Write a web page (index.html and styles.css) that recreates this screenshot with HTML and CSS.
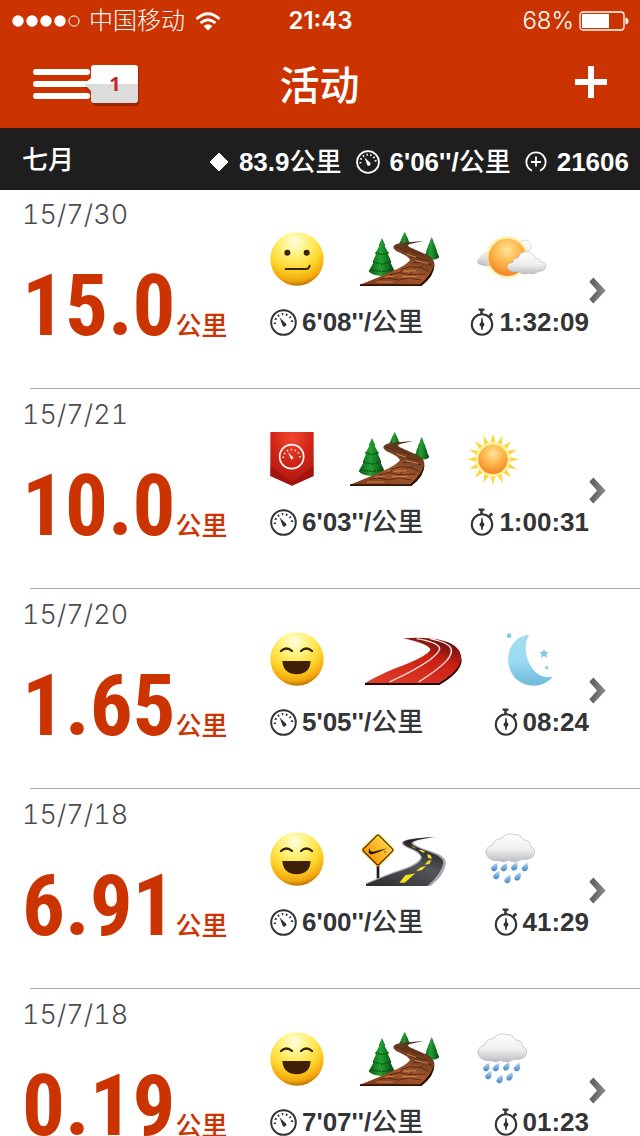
FILE: index.html
```html
<!DOCTYPE html>
<html lang="zh-CN">
<head>
    <meta charset="UTF-8">
    <meta name="viewport" content="width=device-width, initial-scale=1">
    <title>活动</title>
    <link rel="stylesheet" href="styles.css">
</head>
<body>
<!-- 图标 -->
<svg class="sprite" aria-hidden="true">
    <defs>
        <radialGradient id="face-fill" cx="45%" cy="18%" r="85%">
            <stop offset="0" stop-color="#fffde0"/>
            <stop offset="0.3" stop-color="#fff27c"/>
            <stop offset="0.62" stop-color="#fcd62a"/>
            <stop offset="0.86" stop-color="#f2a50c"/>
            <stop offset="1" stop-color="#a86400"/>
        </radialGradient>
        <linearGradient id="tree-fill">
            <stop offset="0" stop-color="#0a5a14"/>
            <stop offset="0.45" stop-color="#22a035"/>
            <stop offset="1" stop-color="#06460f"/>
        </linearGradient>
        <linearGradient id="trail-fill" x1="0" y1="1" x2="0.6" y2="0">
            <stop offset="0" stop-color="#7a3717"/>
            <stop offset="0.5" stop-color="#a4592d"/>
            <stop offset="1" stop-color="#54301c"/>
        </linearGradient>
        <linearGradient id="track-fill" x1="0" y1="1" x2="0.7" y2="0">
            <stop offset="0" stop-color="#e0402c"/>
            <stop offset="0.7" stop-color="#cc1f14"/>
            <stop offset="1" stop-color="#6d130d"/>
        </linearGradient>
        <linearGradient id="road-fill" x1="0" y1="1" x2="0.5" y2="0">
            <stop offset="0" stop-color="#2c2c2e"/>
            <stop offset="0.6" stop-color="#55565a"/>
            <stop offset="1" stop-color="#222"/>
        </linearGradient>
        <linearGradient id="sign-fill" x2="0" y2="1">
            <stop offset="0" stop-color="#ffd24a"/>
            <stop offset="1" stop-color="#f79a00"/>
        </linearGradient>
        <radialGradient id="sun-fill" cx="50%" cy="30%" r="75%">
            <stop offset="0" stop-color="#ffe39a"/>
            <stop offset="0.45" stop-color="#ffb94e"/>
            <stop offset="1" stop-color="#f07c1c"/>
        </radialGradient>
        <radialGradient id="glow-fill">
            <stop offset="0.7" stop-color="#ffd34a"/>
            <stop offset="1" stop-color="#fff3a0" stop-opacity="0"/>
        </radialGradient>
        <linearGradient id="cloud-fill" x2="0" y2="1">
            <stop offset="0" stop-color="#fff"/>
            <stop offset="0.55" stop-color="#efefef"/>
            <stop offset="1" stop-color="#bdbdc0"/>
        </linearGradient>
        <linearGradient id="moon-fill" x2="0" y2="1">
            <stop offset="0" stop-color="#a5dcee"/>
            <stop offset="0.5" stop-color="#9bdcf3"/>
            <stop offset="1" stop-color="#6fb9d8"/>
        </linearGradient>
        <linearGradient id="drop-fill" x2="0" y2="1">
            <stop offset="0" stop-color="#c6dcf0"/>
            <stop offset="1" stop-color="#3b86c8"/>
        </linearGradient>
        <radialGradient id="medal-fill" cx="50%" cy="10%" r="95%">
            <stop offset="0" stop-color="#f0472f"/>
            <stop offset="0.5" stop-color="#cf2416"/>
            <stop offset="1" stop-color="#a81410"/>
        </radialGradient>
        <linearGradient id="arrow-fill">
            <stop offset="0" stop-color="#5a5a5a"/>
            <stop offset="1" stop-color="#8c8c8c"/>
        </linearGradient>
        <path id="tree" d="M40 0 L50 22 L48 24 L60 46 L58 48 L68 72 L66 74 L78 100 Q72 112 40 114 Q8 112 0 100 L14 74 L12 72 L22 48 L20 46 L32 24 L30 22 Z"/>
        <path id="drop" d="M15 0 Q20 18 10 25 Q-1 28 -3 17 Q0 8 15 0 Z"/>
        <path id="rays" d="M-9 -44 L0 -77 L9 -44 Z M-9 44 L0 77 L9 44 Z M-44 -9 L-77 0 L-44 9 Z M44 -9 L77 0 L44 9 Z"/>
    </defs>

    <symbol id="gauge" viewBox="0 0 27 27">
        <circle cx="13.5" cy="13.5" r="12.3" fill="none" stroke="currentColor" stroke-width="2"/>
        <path d="M5 15 A8.6 8.6 0 1 1 22 15" fill="none" stroke="currentColor" stroke-width="2.2" stroke-dasharray="1.6 2.7"/>
        <path d="M9.6 8.4 L16 14.4 A2 2 0 0 1 12.6 16.8 Z" fill="currentColor"/>
    </symbol>
    <symbol id="watch" viewBox="0 0 24 28">
        <circle cx="12" cy="16.5" r="10.2" fill="none" stroke="currentColor" stroke-width="2.1"/>
        <path d="M8.5 0.5 h6 v2.2 h-1.7 v4 h-2.6 v-4 h-1.7 Z M18.5 7.2 L21 4.6 L23.2 6.6 L20.4 9.2 Z M11.4 10 h1.2 l0.5 4.6 a2 2 0 0 1 0 3.8 l-0.5 3.6 h-1.2 l-0.5 -3.6 a2 2 0 0 1 0 -3.8 Z" fill="currentColor"/>
    </symbol>
    <symbol id="fuel" viewBox="0 0 22 22">
        <path d="M7 19.8 A9.6 9.6 0 1 1 15 19.8 M11 5.5 v10 M6 11 h10" fill="none" stroke="currentColor" stroke-width="1.8"/>
    </symbol>
    <symbol id="arrow" viewBox="0 0 51 80">
        <path d="M13 1 L50 40 L13 79 L1 66 L24 40 L1 14 Z" fill="url(#arrow-fill)"/>
    </symbol>

    <symbol id="face-ok" viewBox="0 0 162 162">
        <circle cx="81" cy="81" r="80" fill="url(#face-fill)"/>
        <circle cx="52" cy="62" r="9" fill="#3a2206"/>
        <circle cx="110" cy="62" r="9" fill="#3a2206"/>
        <path d="M47 111 H108 Q117 111 119 101" fill="none" stroke="#3a2206" stroke-width="6" stroke-linecap="round"/>
    </symbol>
    <symbol id="face-happy" viewBox="0 0 162 162">
        <circle cx="81" cy="81" r="80" fill="url(#face-fill)"/>
        <path d="M33 57 Q49 42 66 57 M93 57 Q109 42 126 57" fill="none" stroke="#3a2206" stroke-width="7" stroke-linecap="round"/>
        <path d="M37 87 H122 Q120 126 80 127 Q40 126 37 87 Z" fill="#3f2009"/>
    </symbol>
    <symbol id="medal" viewBox="0 0 132 162">
        <path d="M1 3 Q1 0 4 0 H128 Q131 0 131 3 V132 L66 161 L1 132 Z" fill="url(#medal-fill)"/>
        <path d="M1 100 L66 150 L131 100 V132 L66 161 L1 132 Z" fill="#8e0f0c" opacity="0.45"/>
        <circle cx="65" cy="74" r="36" fill="none" stroke="#fff" stroke-width="5"/>
        <path d="M40 78 A25 25 0 1 1 90 78" fill="none" stroke="#fff" stroke-width="5" stroke-dasharray="4 8"/>
        <path d="M54 61 L71 77 L64 83 Z" fill="#fff"/>
    </symbol>

    <symbol id="trail" viewBox="0 0 240 162">
        <use href="#tree" transform="translate(118 0) scale(0.4 0.32)" fill="url(#tree-fill)"/>
        <use href="#tree" transform="translate(191 15) scale(0.6)" fill="url(#tree-fill)"/>
        <use href="#tree" transform="translate(26 18)" fill="url(#tree-fill)"/>
        <path d="M46 62 L66 68 L86 62 M40 90 L66 96 L94 90 M34 114 L66 119 L98 114" fill="none" stroke="#064a10" stroke-width="4" stroke-dasharray="5 3"/>
        <path d="M0 158 Q60 134 100 116 Q142 98 150 84 Q146 74 120 62 Q100 54 100 44 Q102 36 124 33 L192 26 L150 36 Q138 40 150 46 L208 72 Q226 84 223 104 Q218 130 184 162 H0 Z" fill="url(#trail-fill)"/>
        <path d="M108 45 L126 50 L142 60 M128 42 L156 58 L182 68 M150 72 L178 80 L204 84 M160 92 L190 90 L214 100 M122 112 L152 104 L186 108 L206 118 M88 128 L118 122 L150 128 L196 126 M58 142 L86 138 L116 144 L148 138 L184 144 M118 122 L128 114 M150 128 L160 114 M180 108 L190 98 M86 138 L98 130" fill="none" stroke="#5c2810" stroke-width="3"/>
        <path d="M140 66 L168 76 M166 86 L204 94 M132 118 L168 116 M74 136 L104 132 M126 134 L170 134 M50 150 L100 150" fill="none" stroke="#cf8452" stroke-width="3"/>
        <path d="M0 157 H180 Q212 130 223 98 Q224 132 184 162 H0 Z" fill="#301407"/>
    </symbol>
    <symbol id="track" viewBox="0 0 306 162">
        <path d="M15 153 H235 Q292 120 304 78 L305 88 Q300 124 238 159 H15 Z" fill="#240504"/>
        <path d="M15 153 Q72 120 134 98 Q200 72 211 54 Q212 38 130 19 Q200 14 250 26 Q302 40 304 78 Q300 118 235 153 Z" fill="url(#track-fill)"/>
        <path d="M88 150 Q170 112 210 83 Q244 56 238 46 Q228 30 170 20 M176 150 Q236 112 260 86 Q284 58 268 42 Q250 28 210 20" fill="none" stroke="#fbe9e4" stroke-width="4"/>
    </symbol>
    <symbol id="road" viewBox="0 0 264 162">
        <path d="M50 96 h8 v44 h-8 Z" fill="#1b1b1b"/>
        <path d="M18 154 Q80 126 130 110 Q180 92 182 74 Q176 60 148 50 Q122 40 126 30 Q134 18 226 15 Q166 24 160 32 Q160 40 214 58 Q258 72 258 92 Q254 128 212 162 H18 Z" fill="#aaa6b0"/>
        <path d="M18 157 Q80 130 130 114 Q184 96 186 76 Q180 58 150 48 Q126 38 130 31 Q138 20 220 16 Q158 24 154 33 Q156 42 208 60 Q252 76 250 92 Q244 126 202 162 H18 Z" fill="url(#road-fill)"/>
        <path d="M118 152 L136 130 L166 124 L146 142 L134 152 Z M168 118 L182 106 L198 102 L186 114 Z M194 98 L204 86 L214 84 L208 96 Z M204 78 L202 66 L212 70 L216 80 Z M176 54 L186 54 L196 60 L190 62 Z M152 42 L162 44 L168 50 Z" fill="#f6e11e"/>
        <rect x="17" y="17" width="74" height="74" rx="7" transform="rotate(45 54 54)" fill="url(#sign-fill)"/>
        <rect x="21" y="21" width="66" height="66" rx="5" transform="rotate(45 54 54)" fill="none" stroke="#3a2a06" stroke-width="3"/>
        <path d="M30 48 Q20 64 33 67 Q42 67 82 49 L40 59 Q28 61 30 48 Z" fill="#1b1404"/>
        <circle cx="75" cy="60" r="2.5" fill="#6b4705"/>
    </symbol>

    <symbol id="cloudy" viewBox="0 0 216 162">
        <path d="M6 94 Q0 82 14 78 Q18 62 36 62 L60 60 L70 100 Q20 106 6 94 Z M130 34 Q140 20 154 26 Q170 34 164 52 L140 66 Z" fill="url(#cloud-fill)" stroke="#bbb" stroke-width="1.5"/>
        <circle cx="94" cy="76" r="69" fill="url(#glow-fill)"/>
        <circle cx="94" cy="76" r="56" fill="url(#sun-fill)"/>
        <path d="M94 106 Q92 92 110 92 Q112 76 126 78 Q134 56 156 60 Q174 62 178 80 Q190 76 194 90 Q212 90 210 104 Q206 118 188 118 Q174 130 158 124 Q140 130 130 120 Q98 122 94 106 Z" fill="url(#cloud-fill)" stroke="#aaa" stroke-width="1.5"/>
    </symbol>
    <symbol id="sunny" viewBox="0 0 162 162">
        <g transform="translate(81 82)" fill="#fbd63c">
            <use href="#rays"/>
            <use href="#rays" transform="rotate(22.5)"/>
            <use href="#rays" transform="rotate(45)"/>
            <use href="#rays" transform="rotate(67.5)"/>
            <circle r="52" fill="#fff09a"/>
            <circle r="44" fill="url(#sun-fill)"/>
        </g>
    </symbol>
    <symbol id="moon" viewBox="0 0 162 162">
        <path d="M94 8 C40 12 22 70 34 106 C50 168 130 178 164 134 C130 142 104 118 92 90 C80 60 80 30 94 8 Z" fill="url(#moon-fill)"/>
        <path d="M138 50 l4 9 l10 1 l-7 7 l2 10 l-9 -5 l-9 5 l2 -10 l-7 -7 l10 -1 Z" fill="#85c9df"/>
        <circle cx="33" cy="11" r="7" fill="#85cbe0"/>
        <circle cx="146" cy="107" r="5" fill="#85cbe0"/>
    </symbol>
    <symbol id="rain" viewBox="0 0 162 162">
        <path d="M10 72 Q-4 48 26 39 Q30 20 52 20 Q64 2 90 7 Q110 8 120 24 Q140 26 138 42 Q158 50 150 68 Q144 84 112 82 Q92 96 74 84 Q60 94 46 86 Q18 88 10 72 Z" fill="url(#cloud-fill)" stroke="#b4b4b8" stroke-width="2"/>
        <g fill="url(#drop-fill)">
            <use href="#drop" x="24" y="92"/>
            <use href="#drop" x="53" y="92"/>
            <use href="#drop" x="84" y="90"/>
            <use href="#drop" x="116" y="92"/>
            <use href="#drop" x="30" y="116"/>
            <use href="#drop" x="64" y="128"/>
            <use href="#drop" x="94" y="120"/>
        </g>
    </symbol>
</svg>

<header class="header">
    <div class="status">
        <div class="status-left">
            <svg class="signal" viewBox="0 0 68 12">
                <g fill="#fff">
                    <circle cx="6" cy="6" r="5.7"/>
                    <circle cx="20" cy="6" r="5.7"/>
                    <circle cx="34" cy="6" r="5.7"/>
                    <circle cx="48" cy="6" r="5.7"/>
                </g>
                <circle cx="62" cy="6" r="5.1" fill="none" stroke="#fff"/>
            </svg>
            <span class="carrier">中国移动</span>
            <svg class="wifi" viewBox="0 0 26 19">
                <path d="M1.5 7 Q13 -3.5 24.5 7 M5.5 11 Q13 4.5 20.5 11" fill="none" stroke="#fff" stroke-width="2.8"/>
                <path d="M8.5 14 Q13 10.4 17.5 14 L13 18.5 Z" fill="#fff"/>
            </svg>
        </div>
        <span class="clock">21:43</span>
        <div class="status-right">
            <span>68%</span>
            <svg class="battery" viewBox="0 0 50 20">
                <rect x="1" y="1" width="44" height="18" rx="3" fill="none" stroke="#fff" stroke-width="1.3"/>
                <rect x="3" y="3" width="27" height="14" fill="#fff"/>
                <path d="M46.5 6.5 Q49.5 7 49.5 10 Q49.5 13 46.5 13.5 Z" fill="#fff"/>
            </svg>
        </div>
    </div>
    <div class="nav">
        <button type="button" class="menu-btn" aria-label="菜单">
            <svg viewBox="0 0 108 44">
                <path d="M61 5 Q61 2 64 2 H104 Q107 2 107 5 V39 Q107 42 104 42 H64 Q61 42 61 39 V29 L52 23 L61 16 Z" fill="#7c2000" opacity="0.6"/>
                <g fill="#fff">
                    <rect x="1" y="5" width="57" height="6" rx="3"/>
                    <rect x="1" y="17" width="56" height="6" rx="3"/>
                    <rect x="1" y="29" width="57" height="6" rx="3"/>
                    <path d="M59 4 Q59 1 62 1 H103 Q106 1 106 4 V20 H52 L59 14 Z"/>
                </g>
                <path d="M52 20 H106 V36 Q106 39 103 39 H62 Q59 39 59 36 V27 Z" fill="#dcdcdc"/>
            </svg>
            <span class="menu-badge">1</span>
        </button>
        <h1 class="nav-title">活动</h1>
        <button type="button" class="add-btn" aria-label="添加">
            <svg viewBox="0 0 32 32"><path d="M13 0 h6 v13 h13 v6 h-13 v13 h-6 v-13 h-13 v-6 h13 Z" fill="#fff"/></svg>
        </button>
    </div>
</header>

<div class="summary">
    <h2 class="summary-month">七月</h2>
    <div class="summary-item">
        <svg class="icon-diamond" viewBox="0 0 20 20"><path d="M10 1 L19 10 L10 19 L1 10 Z" fill="#fff" stroke="#fff" stroke-linejoin="round"/></svg>
        <span>83.9<span class="cn">公里</span></span>
    </div>
    <div class="summary-item">
        <svg class="icon-pace"><use href="#gauge"/></svg>
        <span>6'06''/<span class="cn">公里</span></span>
    </div>
    <div class="summary-item">
        <svg class="icon-fuel"><use href="#fuel"/></svg>
        <span>21606</span>
    </div>
</div>

<ul class="list">
    <li class="run">
        <a href="#" class="run-link">
            <div class="run-main">
                <div class="run-date">15/7/30</div>
                <div class="run-distance"><span class="num">15.0</span><span class="unit">公里</span></div>
            </div>
            <div class="run-info">
                <div class="run-icons">
                    <svg class="face"><use href="#face-ok"/></svg>
                    <svg class="trail"><use href="#trail"/></svg>
                    <svg class="cloudy"><use href="#cloudy"/></svg>
                </div>
                <div class="run-stats">
                    <span class="stat"><svg class="icon-gauge"><use href="#gauge"/></svg><span>6'08''/<span class="cn">公里</span></span></span>
                    <span class="stat"><svg class="icon-watch"><use href="#watch"/></svg>1:32:09</span>
                </div>
            </div>
            <svg class="arrow"><use href="#arrow"/></svg>
        </a>
    </li>
    <li class="run">
        <a href="#" class="run-link">
            <div class="run-main">
                <div class="run-date">15/7/21</div>
                <div class="run-distance"><span class="num">10.0</span><span class="unit">公里</span></div>
            </div>
            <div class="run-info">
                <div class="run-icons">
                    <svg class="medal"><use href="#medal"/></svg>
                    <svg class="trail"><use href="#trail"/></svg>
                    <svg class="weather"><use href="#sunny"/></svg>
                </div>
                <div class="run-stats">
                    <span class="stat"><svg class="icon-gauge"><use href="#gauge"/></svg><span>6'03''/<span class="cn">公里</span></span></span>
                    <span class="stat"><svg class="icon-watch"><use href="#watch"/></svg>1:00:31</span>
                </div>
            </div>
            <svg class="arrow"><use href="#arrow"/></svg>
        </a>
    </li>
    <li class="run">
        <a href="#" class="run-link">
            <div class="run-main">
                <div class="run-date">15/7/20</div>
                <div class="run-distance"><span class="num">1.65</span><span class="unit">公里</span></div>
            </div>
            <div class="run-info">
                <div class="run-icons">
                    <svg class="face"><use href="#face-happy"/></svg>
                    <svg class="track"><use href="#track"/></svg>
                    <svg class="weather"><use href="#moon"/></svg>
                </div>
                <div class="run-stats">
                    <span class="stat"><svg class="icon-gauge"><use href="#gauge"/></svg><span>5'05''/<span class="cn">公里</span></span></span>
                    <span class="stat"><svg class="icon-watch"><use href="#watch"/></svg>08:24</span>
                </div>
            </div>
            <svg class="arrow"><use href="#arrow"/></svg>
        </a>
    </li>
    <li class="run">
        <a href="#" class="run-link">
            <div class="run-main">
                <div class="run-date">15/7/18</div>
                <div class="run-distance"><span class="num">6.91</span><span class="unit">公里</span></div>
            </div>
            <div class="run-info">
                <div class="run-icons">
                    <svg class="face"><use href="#face-happy"/></svg>
                    <svg class="road"><use href="#road"/></svg>
                    <svg class="weather"><use href="#rain"/></svg>
                </div>
                <div class="run-stats">
                    <span class="stat"><svg class="icon-gauge"><use href="#gauge"/></svg><span>6'00''/<span class="cn">公里</span></span></span>
                    <span class="stat"><svg class="icon-watch"><use href="#watch"/></svg>41:29</span>
                </div>
            </div>
            <svg class="arrow"><use href="#arrow"/></svg>
        </a>
    </li>
    <li class="run">
        <a href="#" class="run-link">
            <div class="run-main">
                <div class="run-date">15/7/18</div>
                <div class="run-distance"><span class="num">0.19</span><span class="unit">公里</span></div>
            </div>
            <div class="run-info">
                <div class="run-icons">
                    <svg class="face"><use href="#face-happy"/></svg>
                    <svg class="trail"><use href="#trail"/></svg>
                    <svg class="weather"><use href="#rain"/></svg>
                </div>
                <div class="run-stats">
                    <span class="stat"><svg class="icon-gauge"><use href="#gauge"/></svg><span>7'07''/<span class="cn">公里</span></span></span>
                    <span class="stat"><svg class="icon-watch"><use href="#watch"/></svg>01:23</span>
                </div>
            </div>
            <svg class="arrow"><use href="#arrow"/></svg>
        </a>
    </li>
</ul>
</body>
</html>
```
FILE: styles.css
```css
* {
    box-sizing: border-box;
}
body, h1, h2, ul, li {
    margin: 0;
    padding: 0;
}
body {
    background: #ffffff;
    color: #333436;
    font-family: "Liberation Sans", "Noto Sans CJK SC", sans-serif;
}
svg {
    display: block;
    flex: none;
}
button {
    padding: 0;
    border: 0;
    background: none;
    cursor: pointer;
}
.sprite {
    position: absolute;
    width: 0;
    height: 0;
}
/* 顶部 */
.header {
    background: #cb3301;
    color: #ffffff;
}
.status {
    display: grid;
    grid-template-columns: 1fr auto 1fr;
    align-items: center;
    height: 40px;
    padding: 2px 11px 0 12px;
    font-family: Inter, "Noto Sans CJK SC", sans-serif;
    font-size: 24px;
    line-height: 38px;
}
.status-left, .status-right {
    display: flex;
    align-items: center;
}
.status-right {
    justify-content: flex-end;
    gap: 5px;
    font-weight: 300;
}
.signal {
    width: 68px;
    height: 12px;
    margin-right: 9px;
}
.carrier {
    margin-right: 10px;
    font-weight: 300;
}
.wifi {
    width: 26px;
    height: 19px;
}
.clock {
    font-weight: 600;
}
.battery {
    width: 50px;
    height: 20px;
}
.nav {
    display: grid;
    grid-template-columns: 1fr auto 1fr;
    align-items: center;
    height: 88px;
    padding: 4px 33px 0 32px;
}
.menu-btn {
    position: relative;
    width: 108px;
    height: 44px;
}
.menu-badge {
    position: absolute;
    top: 0;
    right: 2px;
    width: 46px;
    color: #c1272d;
    font: bold 20px/40px "Noto Sans", sans-serif;
    text-align: center;
}
.nav-title {
    font-size: 40px;
    font-weight: 500;
    line-height: 48px;
}
.add-btn {
    justify-self: end;
    width: 32px;
    height: 32px;
    margin-bottom: 8px;
}
/* 月份汇总 */
.summary {
    display: flex;
    align-items: center;
    height: 62px;
    padding: 4px 11px 0 22px;
    border-top: 1px solid #33150f;
    background: #1e1e1e;
    color: #ffffff;
    font-size: 26px;
    font-weight: bold;
    line-height: 32px;
}
.summary-month {
    flex: 1;
    padding-bottom: 4px;
    font-size: 26px;
    font-weight: 500;
}
.summary-item {
    display: flex;
    align-items: center;
    gap: 10px;
    margin-left: 14px;
}
.cn {
    font-weight: 500;
}
.icon-diamond {
    width: 20px;
    height: 20px;
}
.icon-pace {
    width: 24px;
    height: 24px;
}
.icon-fuel {
    width: 22px;
    height: 22px;
}
/* 跑步记录 */
.list {
    list-style: none;
}
/* 分隔线，左侧缩进 */
.run {
    height: 200px;
    padding-left: 22px;
    background: linear-gradient(#a9a9a9, #a9a9a9) 30px 198px / 100% 1px no-repeat;
}
.run-link {
    display: flex;
    align-items: center;
    height: 200px;
    padding-right: 34px;
    color: inherit;
    text-decoration: none;
}
.run-main {
    flex: none;
    align-self: flex-start;
    width: 248px;
    padding-top: 8px;
}
.run-date {
    color: #4c4d4f;
    font-family: Inter, sans-serif;
    font-size: 27px;
    font-variant-numeric: tabular-nums;
    font-weight: 300;
    line-height: 34px;
}
.run-distance {
    display: flex;
    align-items: baseline;
    padding-top: 26px;
    color: #cb3301;
    line-height: 96px;
}
.num {
    min-width: 150px;
    font-family: "Roboto Condensed", Roboto, sans-serif;
    font-size: 85px;
    font-weight: bold;
}
.unit {
    font-size: 26px;
    font-weight: 500;
}
.run-info {
    flex: 1;
    align-self: flex-start;
    padding-top: 42px;
}
.run-icons {
    display: flex;
    gap: 36px;
}
.face, .weather {
    width: 54px;
    height: 54px;
}
.medal {
    width: 44px;
    height: 54px;
}
.trail {
    width: 80px;
    height: 54px;
}
.track {
    width: 102px;
    height: 54px;
}
.road {
    width: 88px;
    height: 54px;
}
.cloudy {
    width: 72px;
    height: 54px;
}
.run-stats {
    display: flex;
    justify-content: space-between;
    margin-top: 20px;
    font-size: 26px;
    font-weight: bold;
    line-height: 32px;
}
.stat {
    display: flex;
    align-items: center;
    gap: 5px;
}
.icon-gauge {
    width: 27px;
    height: 27px;
}
.icon-watch {
    width: 24px;
    height: 28px;
}
.arrow {
    width: 17px;
    height: 27px;
}
```
